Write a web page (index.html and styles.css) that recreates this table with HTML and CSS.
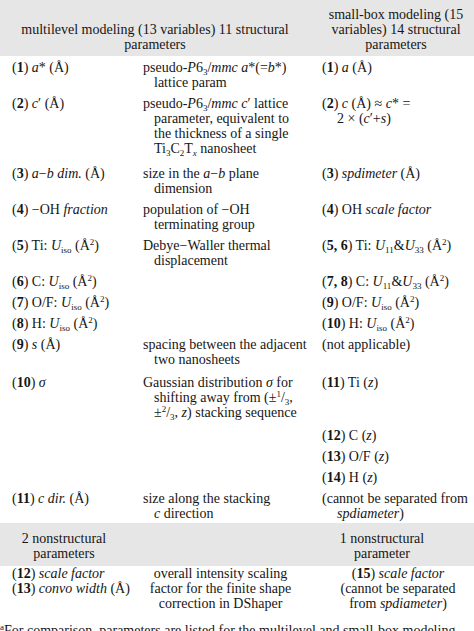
FILE: index.html
```html
<!DOCTYPE html>
<html>
<head>
<meta charset="utf-8">
<link rel="stylesheet" href="styles.css">
</head>
<body>
<table class="params">
  <colgroup><col class="c1"><col class="c2"><col class="c3"></colgroup>
  <thead>
    <tr class="head">
      <th colspan="2" class="hl">multilevel modeling (13 variables) 11 structural<br>parameters</th>
      <th class="hr">small-box modeling (15<br>variables) 14 structural<br>parameters</th>
    </tr>
  </thead>
  <tbody>
    <tr>
      <td>(<b>1</b>) <i>a</i>* (Å)</td>
      <td class="hang">pseudo-<i>P</i>6<sub>3</sub>/<i>mmc a</i>*(=<i>b</i>*)<br>lattice param</td>
      <td class="hang3">(<b>1</b>) <i>a</i> (Å)</td>
    </tr>
    <tr class="r2">
      <td>(<b>2</b>) <i>c</i>′ (Å)</td>
      <td class="hang">pseudo-<i>P</i>6<sub>3</sub>/<i>mmc c</i>′ lattice<br>parameter, equivalent to<br>the thickness of a single<br>Ti<sub>3</sub>C<sub>2</sub>T<sub><i>x</i></sub> nanosheet</td>
      <td class="hang3">(<b>2</b>) <i>c</i> (Å) ≈ <i>c</i>* =<br>2 × (<i>c</i>′+<i>s</i>)</td>
    </tr>
    <tr>
      <td>(<b>3</b>) <i>a</i>−<i>b dim.</i> (Å)</td>
      <td class="hang">size in the <i>a</i>−<i>b</i> plane<br>dimension</td>
      <td class="hang3">(<b>3</b>) <i>spdimeter</i> (Å)</td>
    </tr>
    <tr>
      <td>(<b>4</b>) −OH <i>fraction</i></td>
      <td class="hang">population of −OH<br>terminating group</td>
      <td class="hang3">(<b>4</b>) OH <i>scale factor</i></td>
    </tr>
    <tr>
      <td>(<b>5</b>) Ti: <i>U</i><sub>iso</sub> (Å<sup>2</sup>)</td>
      <td class="hang">Debye−Waller thermal<br>displacement</td>
      <td class="hang3">(<b>5, 6</b>) Ti: <i>U</i><sub>11</sub>&amp;<i>U</i><sub>33</sub> (Å<sup>2</sup>)</td>
    </tr>
    <tr>
      <td>(<b>6</b>) C: <i>U</i><sub>iso</sub> (Å<sup>2</sup>)</td>
      <td></td>
      <td class="hang3">(<b>7, 8</b>) C: <i>U</i><sub>11</sub>&amp;<i>U</i><sub>33</sub> (Å<sup>2</sup>)</td>
    </tr>
    <tr>
      <td>(<b>7</b>) O/F: <i>U</i><sub>iso</sub> (Å<sup>2</sup>)</td>
      <td></td>
      <td class="hang3">(<b>9</b>) O/F: <i>U</i><sub>iso</sub> (Å<sup>2</sup>)</td>
    </tr>
    <tr>
      <td>(<b>8</b>) H: <i>U</i><sub>iso</sub> (Å<sup>2</sup>)</td>
      <td></td>
      <td class="hang3">(<b>10</b>) H: <i>U</i><sub>iso</sub> (Å<sup>2</sup>)</td>
    </tr>
    <tr class="r9">
      <td>(<b>9</b>) <i>s</i> (Å)</td>
      <td class="hang">spacing between the adjacent<br>two nanosheets</td>
      <td class="hang3">(not applicable)</td>
    </tr>
    <tr class="r10">
      <td>(<b>10</b>) <i>σ</i></td>
      <td class="hang">Gaussian distribution <i>σ</i> for<br>shifting away from (±<sup>1</sup>/<sub>3</sub>,<br>±<sup>2</sup>/<sub>3</sub>, <i>z</i>) stacking sequence</td>
      <td class="hang3">(<b>11</b>) Ti (<i>z</i>)</td>
    </tr>
    <tr>
      <td></td><td></td>
      <td class="hang3">(<b>12</b>) C (<i>z</i>)</td>
    </tr>
    <tr>
      <td></td><td></td>
      <td class="hang3">(<b>13</b>) O/F (<i>z</i>)</td>
    </tr>
    <tr>
      <td></td><td></td>
      <td class="hang3">(<b>14</b>) H (<i>z</i>)</td>
    </tr>
    <tr>
      <td>(<b>11</b>) <i>c dir.</i> (Å)</td>
      <td class="hang">size along the stacking<br><i>c</i> direction</td>
      <td class="hang3">(cannot be separated from<br><i>spdiameter</i>)</td>
    </tr>
    <tr class="band">
      <td class="bl">2 nonstructural<br>parameters</td>
      <td></td>
      <td class="br">1 nonstructural<br>parameter</td>
    </tr>
    <tr class="tail">
      <td>(<b>12</b>) <i>scale factor</i></td>
      <td class="mid2">overall intensity scaling</td>
      <td class="mid3">(<b>15</b>) <i>scale factor</i></td>
    </tr>
    <tr class="tail">
      <td>(<b>13</b>) <i>convo width</i> (Å)</td>
      <td class="mid2">factor for the finite shape<br>correction in DShaper</td>
      <td class="mid3">(cannot be separated<br>from <i>spdiameter</i>)</td>
    </tr>
  </tbody>
</table>
<p class="note"><sup>a</sup>For comparison, parameters are listed for the multilevel and small-box modeling approaches.</p>
</body>
</html>
```

FILE: styles.css
```css
html, body {
  margin: 0;
  padding: 0;
  height: 631px;
  overflow: hidden;
  background: #ffffff;
}

body {
  font-family: "Liberation Serif", "Times New Roman", serif;
  font-size: 14px;
  line-height: 15px;
  color: #161616;
}

.params {
  width: 474px;
  border-collapse: collapse;
  table-layout: fixed;
}

.c1 { width: 135px; }
.c2 { width: 179px; }
.c3 { width: 160px; }

.params th {
  font-weight: normal;
  background: #e6e6e6;
  text-align: center;
  vertical-align: bottom;
  padding: 7px 0 4px 0;
}

.params .hl { padding-right: 4px; }
.params .hr { padding-left: 4px; }

.params td {
  vertical-align: top;
  text-align: left;
  padding: 4px 0 2px 0;
  white-space: nowrap;
}

.params td:first-child { padding-left: 12px; }

.params .hang {
  padding-left: 19px;
  text-indent: -11px;
}

.params .hang3 {
  padding-left: 23px;
  text-indent: -15px;
}

.params b { font-weight: bold; }

sub, sup {
  font-size: 9px;
  line-height: 0;
  position: relative;
  vertical-align: baseline;
}
sub { top: 3px; }
sup { top: -5px; }

.params .r2 td { padding-bottom: 6px; }
.params .r9 td { padding-bottom: 4px; }
.params .r10 td { padding-bottom: 4px; }

.params .band td {
  background: #e6e6e6;
  text-align: center;
  padding: 8px 0 5px 0;
}
.params .band .bl { padding-left: 0; padding-right: 7px; }
.params .band .br { padding-left: 8px; padding-right: 32px; }

.params .tail td { padding: 0; }
.params .tail td:first-child { padding-left: 12px; }
.params .tail .mid2 { text-align: center; padding-left: 8px; padding-right: 16px; }
.params .tail .mid3 { text-align: center; padding-left: 8px; }

.note {
  margin: 12px 0 0 0;
  padding-left: 0;
  width: 474px;
}
.note sup { font-size: 9px; }
```
